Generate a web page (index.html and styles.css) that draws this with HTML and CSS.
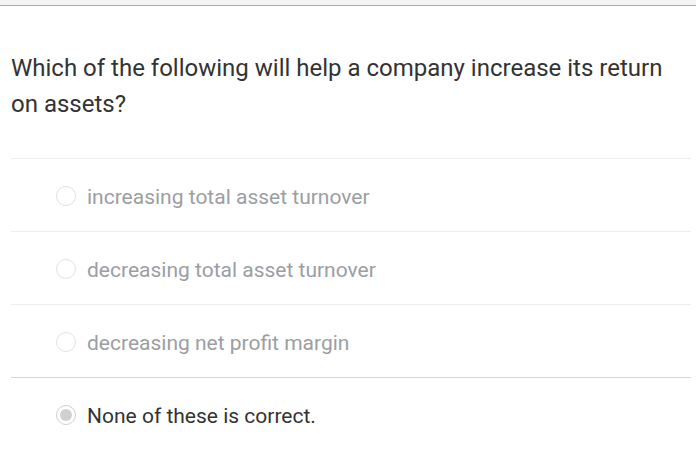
FILE: index.html
```html
<!DOCTYPE html>
<html>
<head>
<meta charset="utf-8">
<link rel="stylesheet" href="styles.css">
</head>
<body>
<div class="topbar"></div>
<main class="quiz">
  <h1 class="question">Which of the following will help a company increase its return on assets?</h1>
  <ul class="options">
    <li class="option"><span class="radio"></span><span class="label">increasing total asset turnover</span></li>
    <li class="option"><span class="radio"></span><span class="label">decreasing total asset turnover</span></li>
    <li class="option"><span class="radio"></span><span class="label">decreasing net profit margin</span></li>
    <li class="option selected"><span class="radio"></span><span class="label">None of these is correct.</span></li>
  </ul>
</main>
</body>
</html>
```

FILE: styles.css
```css
html, body {
  margin: 0;
  padding: 0;
  background: #ffffff;
  font-family: Roboto, "Liberation Sans", sans-serif;
}
.topbar {
  height: 5px;
  background: #f4f4f4;
  border-bottom: 1px solid #a9a9a9;
}
.quiz {
  padding: 0 5px 0 11px;
}
.question {
  margin: 0;
  padding: 44px 0 0 0;
  font-size: 24px;
  font-weight: 400;
  line-height: 36px;
  color: #333333;
  height: 108px;
  border-bottom: 1px solid #eeeeee;
  box-sizing: content-box;
}
.options {
  list-style: none;
  margin: 0;
  padding: 0;
}
.option {
  display: flex;
  align-items: center;
  gap: 11px;
  padding-left: 45px;
  padding-top: 3px;
  box-sizing: border-box;
  height: 73px;
  border-bottom: 1px solid #eeeeee;
  font-size: 21px;
  color: #9b9ea3;
}
.option:nth-child(3) {
  border-bottom-color: #d6d6d6;
}
.option:last-child {
  border-bottom: none;
}
.radio {
  width: 18px;
  height: 18px;
  border: 1px solid #e2e2e2;
  border-radius: 50%;
  box-sizing: content-box;
  flex: none;
  position: relative;
  margin-top: -2px;
}
.selected {
  color: #333333;
}
.selected .radio {
  border: 1px solid #cfcfcf;
  background: #fff;
}
.selected .radio::after {
  content: "";
  position: absolute;
  left: 3px;
  top: 3px;
  width: 12px;
  height: 12px;
  border-radius: 50%;
  background: #d0d0d0;
}
```
